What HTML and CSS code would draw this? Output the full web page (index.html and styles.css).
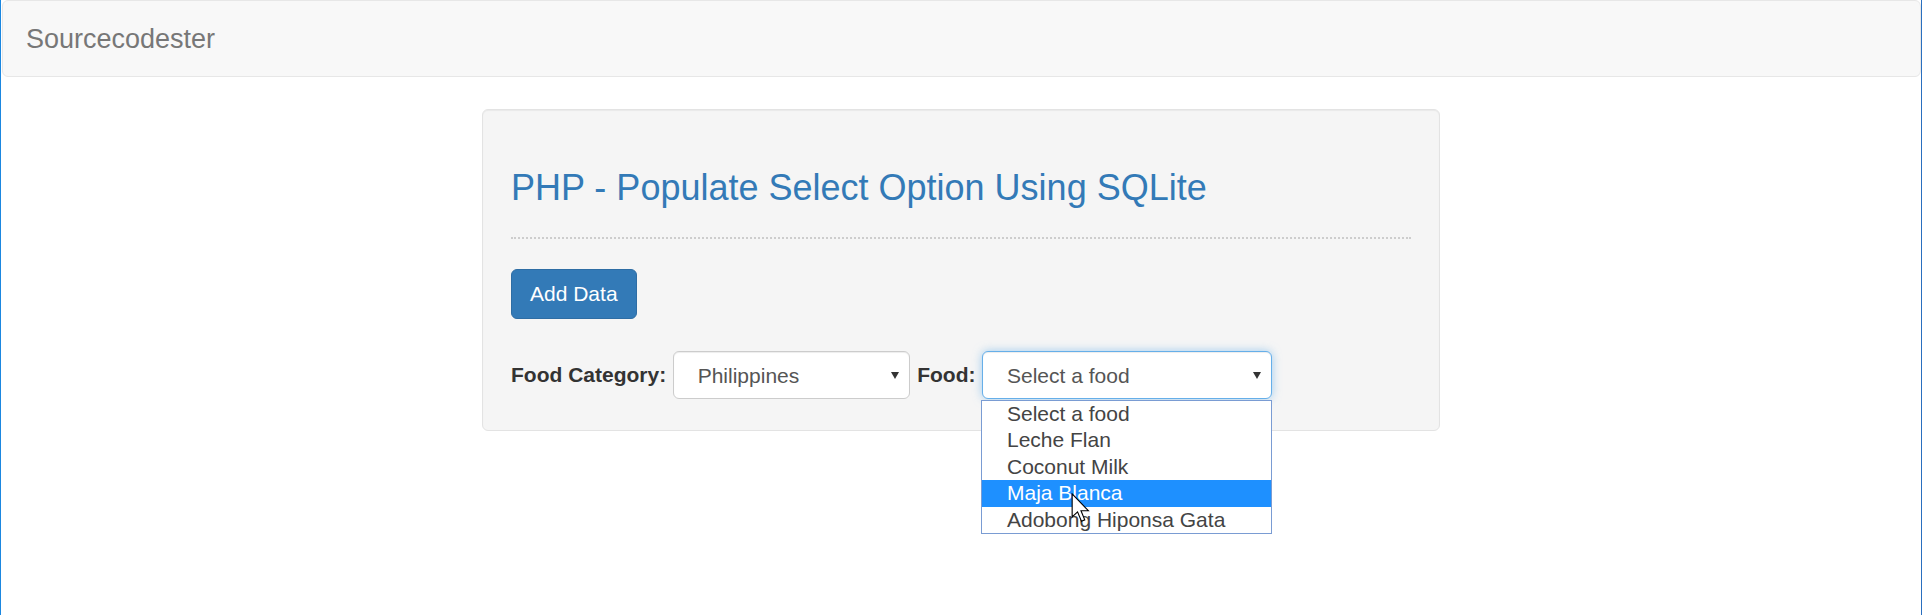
FILE: index.html
```html
<!DOCTYPE html>
<html lang="en">
<head>
    <meta charset="UTF-8">
    <meta name="viewport" content="width=device-width, initial-scale=1.0">
    <title>PHP - Populate Select Option Using SQLite</title>
    <link rel="stylesheet" href="styles.css">
</head>
<body>
    <!-- Navbar -->
    <nav class="navbar">
        <a class="brand" href="#">Sourcecodester</a>
    </nav>

    <!-- Main panel -->
    <div class="well">
        <h3 class="title">PHP - Populate Select Option Using SQLite</h3>
        <hr class="dots">
        <button type="button" class="btn">Add Data</button>

        <form class="form-row">
            <label>Food Category:</label>
            <span class="select-wrap category">
                <select class="control">
                    <option>Philippines</option>
                </select>
            </span>
            <label>Food:</label>
            <span class="select-wrap food">
                <select class="control focused">
                    <option>Select a food</option>
                    <option>Leche Flan</option>
                    <option>Coconut Milk</option>
                    <option>Maja Blanca</option>
                    <option>Adobong Hiponsa Gata</option>
                </select>

                <!-- open option list -->
                <ul class="dropdown">
                    <li>Select a food</li>
                    <li>Leche Flan</li>
                    <li>Coconut Milk</li>
                    <li class="active">Maja Blanca</li>
                    <li>Adobong Hiponsa Gata</li>
                </ul>

                <svg class="cursor" width="20" height="30" viewBox="0 0 13 20">
                    <path d="M0.6 0.6 L0.6 16 L4.2 12.6 L6.8 18.8 L9 17.9 L6.5 11.8 L11.4 11.8 Z" fill="#fff" stroke="#000" stroke-width="0.75" stroke-linejoin="miter"/>
                </svg>
            </span>
        </form>
    </div>
</body>
</html>
```

FILE: styles.css
```css
html, body {
    height: 100%;
}

body {
    margin: 0;
    box-sizing: border-box;
    border-left: 1px solid #1b87e0;
    border-right: 1px solid #2a6fbf;
    background-color: #fff;
    font-family: "Liberation Sans", Arial, sans-serif;
    font-size: 21px;
    color: #333;
    overflow: hidden;
}

/* Navbar */
.navbar {
    box-sizing: border-box;
    height: 77px;
    margin: 0 0 32px 1px;
    padding: 0 23px;
    display: flex;
    align-items: center;
    background-color: #f8f8f8;
    border: 1px solid #e7e7e7;
    border-radius: 6px;
}

.brand {
    font-size: 27px;
    line-height: 30px;
    color: #777;
    text-decoration: none;
}

/* Panel */
.well {
    box-sizing: border-box;
    width: 958px;
    margin: 0 auto;
    padding: 28px 28px 31px;
    background-color: #f5f5f5;
    border: 1px solid #e3e3e3;
    border-radius: 6px;
    box-shadow: inset 0 1px 1px rgba(0, 0, 0, 0.05);
}

.title {
    margin: 30px 0 0;
    font-size: 36px;
    font-weight: normal;
    line-height: 40px;
    color: #337ab7;
}

.dots {
    margin: 29px 0 30px;
    border: 0;
    border-top: 2px dotted #cdcdcd;
}

.btn {
    display: block;
    box-sizing: border-box;
    height: 50px;
    margin: 0 0 32px;
    padding: 0 18px;
    font-family: inherit;
    font-size: 21px;
    color: #fff;
    background-color: #337ab7;
    border: 1px solid #2e6da4;
    border-radius: 6px;
    cursor: pointer;
}

/* Form */
.form-row {
    display: flex;
    align-items: center;
    gap: 7px;
}

.form-row label {
    font-weight: bold;
    color: #333;
}

.select-wrap {
    position: relative;
    display: block;
    height: 48px;
}

.select-wrap.category {
    width: 237px;
}

.select-wrap.food {
    width: 290px;
}

.select-wrap::after {
    content: '';
    position: absolute;
    right: 11px;
    top: 21px;
    border-top: 7px solid #333;
    border-left: 4px solid transparent;
    border-right: 4px solid transparent;
    pointer-events: none;
}

.control {
    -webkit-appearance: none;
    appearance: none;
    box-sizing: border-box;
    width: 100%;
    height: 48px;
    padding: 0 30px 0 23.5px;
    font-family: inherit;
    font-size: 21px;
    color: #555;
    background-color: #fff;
    border: 1px solid #ccc;
    border-radius: 6px;
    box-shadow: inset 0 1px 1px rgba(0, 0, 0, 0.075);
}

.control.focused {
    border-color: #66afe9;
    outline: 0;
    box-shadow: inset 0 1px 1px rgba(0, 0, 0, 0.075), 0 0 10px rgba(102, 175, 233, 0.6);
}

/* Open option list */
.dropdown {
    position: absolute;
    top: 49px;
    left: -1px;
    width: 291px;
    box-sizing: border-box;
    margin: 0;
    padding: 0;
    list-style: none;
    background-color: #fff;
    border: 1px solid #7a9cd3;
}

.dropdown li {
    height: 26.4px;
    line-height: 26.4px;
    padding-left: 24.5px;
    font-size: 21px;
    color: #444;
    white-space: nowrap;
}

.dropdown li.active {
    background-color: #1e90ff;
    color: #fff;
}

.cursor {
    position: absolute;
    left: 89px;
    top: 142px;
}
```
